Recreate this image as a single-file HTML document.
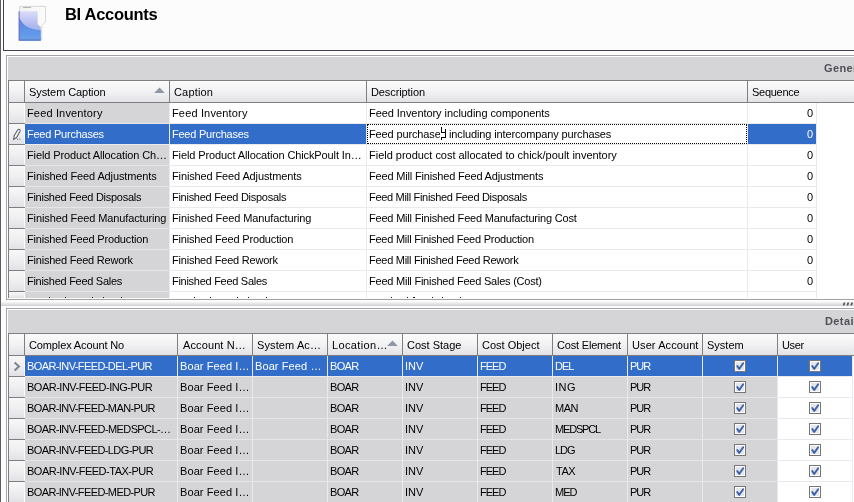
<!DOCTYPE html><html><head><meta charset="utf-8"><style>
html,body{margin:0;padding:0;}
body{width:854px;height:502px;position:relative;overflow:hidden;background:#fcfcfc;font-family:"Liberation Sans", sans-serif;font-size:11px;color:#000;}
div{box-sizing:border-box;}
.t{position:absolute;white-space:pre;overflow:hidden;will-change:transform;}
.hdr{background:linear-gradient(#fbfbfb 0%,#f3f3f5 45%,#e3e3e7 100%);}
.ind{background:linear-gradient(#f7f7f7 0%,#efeff1 50%,#e2e2e6 100%);}
.cap{background:linear-gradient(#dcdcdc,#d0d0d2);}
</style></head><body>
<div style="position:absolute;left:0px;top:0px;width:1px;height:502px;background:#5e5e60;"></div>
<div style="position:absolute;left:3px;top:0px;width:1px;height:51px;background:#404452;"></div>
<div style="position:absolute;left:3px;top:50px;width:851px;height:1px;background:#404452;"></div>
<svg style="position:absolute;left:16px;top:4px" width="32" height="40" viewBox="0 0 32 40">
<defs>
<linearGradient id="fg" x1="0" y1="0" x2="0" y2="1">
<stop offset="0" stop-color="#dcdcf8"/><stop offset="0.5" stop-color="#aeb8ee"/><stop offset="1" stop-color="#94acec"/></linearGradient>
<linearGradient id="bg2" x1="0" y1="0" x2="0" y2="1">
<stop offset="0" stop-color="#5a82dc"/><stop offset="1" stop-color="#64a2f0"/></linearGradient>
<linearGradient id="pg" x1="0" y1="0" x2="1" y2="0">
<stop offset="0" stop-color="#f2f2f2"/><stop offset="1" stop-color="#fbfbfb"/></linearGradient>
</defs>
<path d="M3.6 2.4 L29.5 2.4 L29.5 18 L25.8 21.5 L25.8 35.5 L3.6 35.5 Z" fill="url(#pg)" stroke="#d2d2d2" stroke-width="0.9"/>
<rect x="7" y="3" width="8" height="1" fill="#9a9a9a" opacity="0.7"/>
<path d="M3 7.2 L22 7.2 L22 20.3 L24.7 22.7 L24.7 36.4 L3 36.4 Z" fill="url(#fg)"/>
<path d="M3.3 13.5 Q8 25.5 24.7 26 L24.7 36.4 L3.3 36.4 Z" fill="url(#bg2)"/>
<rect x="3" y="32.5" width="21.7" height="3.9" fill="#6c9ee6"/>
<rect x="3" y="35.6" width="21.7" height="0.9" fill="#4a6cc0"/>
<rect x="2.6" y="7.2" width="1" height="29.2" fill="#6464c4"/>
<path d="M22 7.6 L22 20.3 L24.7 22.7" fill="none" stroke="#ffffff" stroke-width="0.8" opacity="0.8"/>
</svg>
<div class="t" style="left:65px;top:2px;height:24px;line-height:24px;font-size:16.5px;font-weight:bold;letter-spacing:-0.3px;">BI Accounts</div>
<div style="position:absolute;left:6px;top:55px;width:848px;height:1px;background:#a3a3a5;"></div>
<div style="position:absolute;left:6px;top:55px;width:1px;height:245px;background:#a3a3a5;"></div>
<div style="position:absolute;left:6px;top:299px;width:848px;height:1px;background:#a3a3a5;"></div>
<div style="position:absolute;left:7px;top:56px;width:847px;height:1px;background:#ffffff;"></div>
<div style="position:absolute;left:7px;top:56px;width:1px;height:243px;background:#ffffff;"></div>
<div style="position:absolute;left:8px;top:57px;width:846px;height:23px;background:#d5d4d6;"></div>
<div class="t" style="left:824px;top:59px;height:18px;line-height:18px;font-weight:bold;color:#505058;letter-spacing:0.4px;">General</div>
<div style="position:absolute;left:6px;top:308px;width:848px;height:1px;background:#a3a3a5;"></div>
<div style="position:absolute;left:6px;top:308px;width:1px;height:233px;background:#a3a3a5;"></div>
<div style="position:absolute;left:6px;top:540px;width:848px;height:1px;background:#a3a3a5;"></div>
<div style="position:absolute;left:7px;top:309px;width:847px;height:1px;background:#ffffff;"></div>
<div style="position:absolute;left:7px;top:309px;width:1px;height:231px;background:#ffffff;"></div>
<div style="position:absolute;left:8px;top:310px;width:846px;height:23px;background:#d5d4d6;"></div>
<div class="t" style="left:825px;top:312px;height:18px;line-height:18px;font-weight:bold;color:#505058;letter-spacing:0.4px;">Details</div>
<div style="position:absolute;left:0px;top:302px;width:854px;height:4px;background:linear-gradient(#f6f6f6,#d0d0d4);"></div>
<div style="position:absolute;left:0px;top:0px;width:1px;height:502px;background:#5e5e60;"></div>
<svg style="position:absolute;left:842px;top:302px" width="12" height="4" viewBox="0 0 12 4"><path d="M1.6 0.6 L3.4 0.6 L2.4 3.4 L0.8 3.4 Z M5.4 0.6 L7.2 0.6 L6.2 3.4 L4.6 3.4 Z M9.2 0.6 L11 0.6 L10 3.4 L8.4 3.4 Z" fill="#505058"/></svg>
<div style="position:absolute;left:8px;top:80px;width:846px;height:23px;background:#7f7f83;"></div>
<div class="hdr" style="position:absolute;left:9px;top:81px;width:845px;height:21px;"></div>
<div style="position:absolute;left:24px;top:80px;width:1px;height:23px;background:#7f7f83;"></div>
<div style="position:absolute;left:169px;top:80px;width:1px;height:23px;background:#7f7f83;"></div>
<div style="position:absolute;left:366px;top:80px;width:1px;height:23px;background:#7f7f83;"></div>
<div style="position:absolute;left:747px;top:80px;width:1px;height:23px;background:#7f7f83;"></div>
<div style="position:absolute;left:8px;top:80px;width:1px;height:218px;background:#7f7f83;"></div>
<div style="position:absolute;left:24px;top:80px;width:1px;height:218px;background:#7f7f83;"></div>
<div class="t" style="left:29px;top:82px;width:139px;height:20px;line-height:20px;letter-spacing:-0.077px;">System Caption</div>
<div class="t" style="left:174px;top:82px;width:191px;height:20px;line-height:20px;letter-spacing:0.167px;">Caption</div>
<div class="t" style="left:371px;top:82px;width:375px;height:20px;line-height:20px;letter-spacing:-0.100px;">Description</div>
<div class="t" style="left:752px;top:82px;width:63px;height:20px;line-height:20px;letter-spacing:-0.286px;">Sequence</div>
<svg style="position:absolute;left:154px;top:87px" width="11" height="7" viewBox="0 0 11 7"><path d="M0.2 6 L5.5 0.6 L10.8 6 Z" fill="#8e98a4"/></svg>
<div style="position:absolute;left:9px;top:103px;width:845px;height:195px;background:#ffffff;"></div>
<div class="ind" style="position:absolute;left:9px;top:103px;width:15px;height:20px;"></div>
<div style="position:absolute;left:8px;top:123px;width:17px;height:1px;background:#7f7f83;"></div>
<div style="position:absolute;left:25px;top:103px;width:144px;height:20px;background:#d5d4d6;"></div>
<div class="t" style="left:27px;top:103px;width:142px;height:20px;line-height:20px;color:#000;letter-spacing:0.154px;">Feed Inventory</div>
<div style="position:absolute;left:170px;top:103px;width:196px;height:20px;background:#ffffff;"></div>
<div class="t" style="left:172px;top:103px;width:194px;height:20px;line-height:20px;color:#000;letter-spacing:0.154px;">Feed Inventory</div>
<div style="position:absolute;left:367px;top:103px;width:380px;height:20px;background:#ffffff;"></div>
<div class="t" style="left:369px;top:103px;width:378px;height:20px;line-height:20px;color:#000;letter-spacing:-0.059px;">Feed Inventory including components</div>
<div style="position:absolute;left:748px;top:103px;width:68px;height:20px;background:#ffffff;"></div>
<div class="t" style="left:748px;top:103px;width:65px;height:20px;line-height:20px;color:#000;text-align:right;">0</div>
<div style="position:absolute;left:25px;top:123px;width:145px;height:1px;background:#e6e6e8;"></div>
<div style="position:absolute;left:170px;top:123px;width:197px;height:1px;background:#e9e9ee;"></div>
<div style="position:absolute;left:367px;top:123px;width:381px;height:1px;background:#e9e9ee;"></div>
<div style="position:absolute;left:748px;top:123px;width:69px;height:1px;background:#e9e9ee;"></div>
<div class="ind" style="position:absolute;left:9px;top:124px;width:15px;height:20px;"></div>
<div style="position:absolute;left:8px;top:144px;width:17px;height:1px;background:#7f7f83;"></div>
<div style="position:absolute;left:25px;top:124px;width:144px;height:20px;background:#326ec9;"></div>
<div class="t" style="left:27px;top:124px;width:142px;height:20px;line-height:20px;color:#fff;letter-spacing:-0.231px;">Feed Purchases</div>
<div style="position:absolute;left:170px;top:124px;width:196px;height:20px;background:#326ec9;"></div>
<div class="t" style="left:172px;top:124px;width:194px;height:20px;line-height:20px;color:#fff;letter-spacing:-0.231px;">Feed Purchases</div>
<div style="position:absolute;left:367px;top:124px;width:380px;height:20px;background:#ffffff;"></div>
<div class="t" style="left:369px;top:124px;width:378px;height:20px;line-height:20px;color:#000;letter-spacing:-0.130px;">Feed purchases including intercompany purchases</div>
<div style="position:absolute;left:748px;top:124px;width:68px;height:20px;background:#326ec9;"></div>
<div class="t" style="left:748px;top:124px;width:65px;height:20px;line-height:20px;color:#fff;text-align:right;">0</div>
<div style="position:absolute;left:25px;top:144px;width:145px;height:1px;background:#e9e9ee;"></div>
<div style="position:absolute;left:170px;top:144px;width:197px;height:1px;background:#e9e9ee;"></div>
<div style="position:absolute;left:367px;top:144px;width:381px;height:1px;background:#e9e9ee;"></div>
<div style="position:absolute;left:748px;top:144px;width:69px;height:1px;background:#e9e9ee;"></div>
<div class="ind" style="position:absolute;left:9px;top:145px;width:15px;height:20px;"></div>
<div style="position:absolute;left:8px;top:165px;width:17px;height:1px;background:#7f7f83;"></div>
<div style="position:absolute;left:25px;top:145px;width:144px;height:20px;background:#d5d4d6;"></div>
<div class="t" style="left:27px;top:145px;width:142px;height:20px;line-height:20px;color:#000;letter-spacing:-0.111px;">Field Product Allocation Ch…</div>
<div style="position:absolute;left:170px;top:145px;width:196px;height:20px;background:#ffffff;"></div>
<div class="t" style="left:172px;top:145px;width:194px;height:20px;line-height:20px;color:#000;letter-spacing:-0.105px;">Field Product Allocation ChickPoult In…</div>
<div style="position:absolute;left:367px;top:145px;width:380px;height:20px;background:#ffffff;"></div>
<div class="t" style="left:369px;top:145px;width:378px;height:20px;line-height:20px;color:#000;letter-spacing:-0.019px;">Field product cost allocated to chick/poult inventory</div>
<div style="position:absolute;left:748px;top:145px;width:68px;height:20px;background:#ffffff;"></div>
<div class="t" style="left:748px;top:145px;width:65px;height:20px;line-height:20px;color:#000;text-align:right;">0</div>
<div style="position:absolute;left:25px;top:165px;width:145px;height:1px;background:#e6e6e8;"></div>
<div style="position:absolute;left:170px;top:165px;width:197px;height:1px;background:#e9e9ee;"></div>
<div style="position:absolute;left:367px;top:165px;width:381px;height:1px;background:#e9e9ee;"></div>
<div style="position:absolute;left:748px;top:165px;width:69px;height:1px;background:#e9e9ee;"></div>
<div class="ind" style="position:absolute;left:9px;top:166px;width:15px;height:20px;"></div>
<div style="position:absolute;left:8px;top:186px;width:17px;height:1px;background:#7f7f83;"></div>
<div style="position:absolute;left:25px;top:166px;width:144px;height:20px;background:#d5d4d6;"></div>
<div class="t" style="left:27px;top:166px;width:142px;height:20px;line-height:20px;color:#000;letter-spacing:-0.125px;">Finished Feed Adjustments</div>
<div style="position:absolute;left:170px;top:166px;width:196px;height:20px;background:#ffffff;"></div>
<div class="t" style="left:172px;top:166px;width:194px;height:20px;line-height:20px;color:#000;letter-spacing:-0.125px;">Finished Feed Adjustments</div>
<div style="position:absolute;left:367px;top:166px;width:380px;height:20px;background:#ffffff;"></div>
<div class="t" style="left:369px;top:166px;width:378px;height:20px;line-height:20px;color:#000;letter-spacing:-0.176px;">Feed Mill Finished Feed Adjustments</div>
<div style="position:absolute;left:748px;top:166px;width:68px;height:20px;background:#ffffff;"></div>
<div class="t" style="left:748px;top:166px;width:65px;height:20px;line-height:20px;color:#000;text-align:right;">0</div>
<div style="position:absolute;left:25px;top:186px;width:145px;height:1px;background:#e6e6e8;"></div>
<div style="position:absolute;left:170px;top:186px;width:197px;height:1px;background:#e9e9ee;"></div>
<div style="position:absolute;left:367px;top:186px;width:381px;height:1px;background:#e9e9ee;"></div>
<div style="position:absolute;left:748px;top:186px;width:69px;height:1px;background:#e9e9ee;"></div>
<div class="ind" style="position:absolute;left:9px;top:187px;width:15px;height:20px;"></div>
<div style="position:absolute;left:8px;top:207px;width:17px;height:1px;background:#7f7f83;"></div>
<div style="position:absolute;left:25px;top:187px;width:144px;height:20px;background:#d5d4d6;"></div>
<div class="t" style="left:27px;top:187px;width:142px;height:20px;line-height:20px;color:#000;letter-spacing:-0.273px;">Finished Feed Disposals</div>
<div style="position:absolute;left:170px;top:187px;width:196px;height:20px;background:#ffffff;"></div>
<div class="t" style="left:172px;top:187px;width:194px;height:20px;line-height:20px;color:#000;letter-spacing:-0.273px;">Finished Feed Disposals</div>
<div style="position:absolute;left:367px;top:187px;width:380px;height:20px;background:#ffffff;"></div>
<div class="t" style="left:369px;top:187px;width:378px;height:20px;line-height:20px;color:#000;letter-spacing:-0.312px;">Feed Mill Finished Feed Disposals</div>
<div style="position:absolute;left:748px;top:187px;width:68px;height:20px;background:#ffffff;"></div>
<div class="t" style="left:748px;top:187px;width:65px;height:20px;line-height:20px;color:#000;text-align:right;">0</div>
<div style="position:absolute;left:25px;top:207px;width:145px;height:1px;background:#e6e6e8;"></div>
<div style="position:absolute;left:170px;top:207px;width:197px;height:1px;background:#e9e9ee;"></div>
<div style="position:absolute;left:367px;top:207px;width:381px;height:1px;background:#e9e9ee;"></div>
<div style="position:absolute;left:748px;top:207px;width:69px;height:1px;background:#e9e9ee;"></div>
<div class="ind" style="position:absolute;left:9px;top:208px;width:15px;height:20px;"></div>
<div style="position:absolute;left:8px;top:228px;width:17px;height:1px;background:#7f7f83;"></div>
<div style="position:absolute;left:25px;top:208px;width:144px;height:20px;background:#d5d4d6;"></div>
<div class="t" style="left:27px;top:208px;width:142px;height:20px;line-height:20px;color:#000;letter-spacing:-0.115px;">Finished Feed Manufacturing</div>
<div style="position:absolute;left:170px;top:208px;width:196px;height:20px;background:#ffffff;"></div>
<div class="t" style="left:172px;top:208px;width:194px;height:20px;line-height:20px;color:#000;letter-spacing:-0.115px;">Finished Feed Manufacturing</div>
<div style="position:absolute;left:367px;top:208px;width:380px;height:20px;background:#ffffff;"></div>
<div class="t" style="left:369px;top:208px;width:378px;height:20px;line-height:20px;color:#000;letter-spacing:-0.195px;">Feed Mill Finished Feed Manufacturing Cost</div>
<div style="position:absolute;left:748px;top:208px;width:68px;height:20px;background:#ffffff;"></div>
<div class="t" style="left:748px;top:208px;width:65px;height:20px;line-height:20px;color:#000;text-align:right;">0</div>
<div style="position:absolute;left:25px;top:228px;width:145px;height:1px;background:#e6e6e8;"></div>
<div style="position:absolute;left:170px;top:228px;width:197px;height:1px;background:#e9e9ee;"></div>
<div style="position:absolute;left:367px;top:228px;width:381px;height:1px;background:#e9e9ee;"></div>
<div style="position:absolute;left:748px;top:228px;width:69px;height:1px;background:#e9e9ee;"></div>
<div class="ind" style="position:absolute;left:9px;top:229px;width:15px;height:20px;"></div>
<div style="position:absolute;left:8px;top:249px;width:17px;height:1px;background:#7f7f83;"></div>
<div style="position:absolute;left:25px;top:229px;width:144px;height:20px;background:#d5d4d6;"></div>
<div class="t" style="left:27px;top:229px;width:142px;height:20px;line-height:20px;color:#000;letter-spacing:-0.174px;">Finished Feed Production</div>
<div style="position:absolute;left:170px;top:229px;width:196px;height:20px;background:#ffffff;"></div>
<div class="t" style="left:172px;top:229px;width:194px;height:20px;line-height:20px;color:#000;letter-spacing:-0.174px;">Finished Feed Production</div>
<div style="position:absolute;left:367px;top:229px;width:380px;height:20px;background:#ffffff;"></div>
<div class="t" style="left:369px;top:229px;width:378px;height:20px;line-height:20px;color:#000;letter-spacing:-0.242px;">Feed Mill Finished Feed Production</div>
<div style="position:absolute;left:748px;top:229px;width:68px;height:20px;background:#ffffff;"></div>
<div class="t" style="left:748px;top:229px;width:65px;height:20px;line-height:20px;color:#000;text-align:right;">0</div>
<div style="position:absolute;left:25px;top:249px;width:145px;height:1px;background:#e6e6e8;"></div>
<div style="position:absolute;left:170px;top:249px;width:197px;height:1px;background:#e9e9ee;"></div>
<div style="position:absolute;left:367px;top:249px;width:381px;height:1px;background:#e9e9ee;"></div>
<div style="position:absolute;left:748px;top:249px;width:69px;height:1px;background:#e9e9ee;"></div>
<div class="ind" style="position:absolute;left:9px;top:250px;width:15px;height:20px;"></div>
<div style="position:absolute;left:8px;top:270px;width:17px;height:1px;background:#7f7f83;"></div>
<div style="position:absolute;left:25px;top:250px;width:144px;height:20px;background:#d5d4d6;"></div>
<div class="t" style="left:27px;top:250px;width:142px;height:20px;line-height:20px;color:#000;letter-spacing:-0.211px;">Finished Feed Rework</div>
<div style="position:absolute;left:170px;top:250px;width:196px;height:20px;background:#ffffff;"></div>
<div class="t" style="left:172px;top:250px;width:194px;height:20px;line-height:20px;color:#000;letter-spacing:-0.211px;">Finished Feed Rework</div>
<div style="position:absolute;left:367px;top:250px;width:380px;height:20px;background:#ffffff;"></div>
<div class="t" style="left:369px;top:250px;width:378px;height:20px;line-height:20px;color:#000;letter-spacing:-0.276px;">Feed Mill Finished Feed Rework</div>
<div style="position:absolute;left:748px;top:250px;width:68px;height:20px;background:#ffffff;"></div>
<div class="t" style="left:748px;top:250px;width:65px;height:20px;line-height:20px;color:#000;text-align:right;">0</div>
<div style="position:absolute;left:25px;top:270px;width:145px;height:1px;background:#e6e6e8;"></div>
<div style="position:absolute;left:170px;top:270px;width:197px;height:1px;background:#e9e9ee;"></div>
<div style="position:absolute;left:367px;top:270px;width:381px;height:1px;background:#e9e9ee;"></div>
<div style="position:absolute;left:748px;top:270px;width:69px;height:1px;background:#e9e9ee;"></div>
<div class="ind" style="position:absolute;left:9px;top:271px;width:15px;height:20px;"></div>
<div style="position:absolute;left:8px;top:291px;width:17px;height:1px;background:#7f7f83;"></div>
<div style="position:absolute;left:25px;top:271px;width:144px;height:20px;background:#d5d4d6;"></div>
<div class="t" style="left:27px;top:271px;width:142px;height:20px;line-height:20px;color:#000;letter-spacing:-0.278px;">Finished Feed Sales</div>
<div style="position:absolute;left:170px;top:271px;width:196px;height:20px;background:#ffffff;"></div>
<div class="t" style="left:172px;top:271px;width:194px;height:20px;line-height:20px;color:#000;letter-spacing:-0.278px;">Finished Feed Sales</div>
<div style="position:absolute;left:367px;top:271px;width:380px;height:20px;background:#ffffff;"></div>
<div class="t" style="left:369px;top:271px;width:378px;height:20px;line-height:20px;color:#000;letter-spacing:-0.229px;">Feed Mill Finished Feed Sales (Cost)</div>
<div style="position:absolute;left:748px;top:271px;width:68px;height:20px;background:#ffffff;"></div>
<div class="t" style="left:748px;top:271px;width:65px;height:20px;line-height:20px;color:#000;text-align:right;">0</div>
<div style="position:absolute;left:25px;top:291px;width:145px;height:1px;background:#e6e6e8;"></div>
<div style="position:absolute;left:170px;top:291px;width:197px;height:1px;background:#e9e9ee;"></div>
<div style="position:absolute;left:367px;top:291px;width:381px;height:1px;background:#e9e9ee;"></div>
<div style="position:absolute;left:748px;top:291px;width:69px;height:1px;background:#e9e9ee;"></div>
<div class="ind" style="position:absolute;left:9px;top:292px;width:15px;height:6px;"></div>
<div style="position:absolute;left:25px;top:292px;width:144px;height:6px;background:#d5d4d6;"></div>
<div style="position:absolute;left:170px;top:292px;width:196px;height:6px;background:#ffffff;"></div>
<div style="position:absolute;left:367px;top:292px;width:380px;height:6px;background:#ffffff;"></div>
<div style="position:absolute;left:748px;top:292px;width:68px;height:6px;background:#ffffff;"></div>
<div style="position:absolute;left:169px;top:103px;width:1px;height:195px;background:#e9e9ee;"></div>
<div style="position:absolute;left:366px;top:103px;width:1px;height:195px;background:#e9e9ee;"></div>
<div style="position:absolute;left:747px;top:103px;width:1px;height:195px;background:#e9e9ee;"></div>
<div style="position:absolute;left:816px;top:103px;width:1px;height:195px;background:#e9e9ee;"></div>
<div style="position:absolute;left:49px;top:297px;width:1px;height:1px;background:#1a1a1a;"></div>
<div style="position:absolute;left:65px;top:297px;width:1px;height:1px;background:#1a1a1a;"></div>
<div style="position:absolute;left:92px;top:297px;width:1px;height:1px;background:#1a1a1a;"></div>
<div style="position:absolute;left:103px;top:297px;width:1px;height:1px;background:#1a1a1a;"></div>
<div style="position:absolute;left:121px;top:297px;width:1px;height:1px;background:#1a1a1a;"></div>
<div style="position:absolute;left:194px;top:297px;width:1px;height:1px;background:#1a1a1a;"></div>
<div style="position:absolute;left:210px;top:297px;width:1px;height:1px;background:#1a1a1a;"></div>
<div style="position:absolute;left:237px;top:297px;width:1px;height:1px;background:#1a1a1a;"></div>
<div style="position:absolute;left:248px;top:297px;width:1px;height:1px;background:#1a1a1a;"></div>
<div style="position:absolute;left:266px;top:297px;width:1px;height:1px;background:#1a1a1a;"></div>
<div style="position:absolute;left:391px;top:297px;width:1px;height:1px;background:#1a1a1a;"></div>
<div style="position:absolute;left:407px;top:297px;width:1px;height:1px;background:#1a1a1a;"></div>
<div style="position:absolute;left:432px;top:297px;width:1px;height:1px;background:#1a1a1a;"></div>
<div style="position:absolute;left:442px;top:297px;width:1px;height:1px;background:#1a1a1a;"></div>
<div style="position:absolute;left:460px;top:297px;width:1px;height:1px;background:#1a1a1a;"></div>
<div style="position:absolute;left:413px;top:297px;width:2px;height:1px;background:#1a1a1a;"></div>
<div style="position:absolute;left:440px;top:126px;width:7px;height:14px;background:#ffffff;"></div>
<div style="position:absolute;left:441px;top:127px;width:1px;height:6px;background:#000;"></div>
<div style="position:absolute;left:441px;top:132px;width:5px;height:1px;background:#000;"></div>
<div style="position:absolute;left:445px;top:129px;width:1px;height:9px;background:#000;"></div>
<div style="position:absolute;left:441px;top:137px;width:5px;height:1px;background:#000;"></div>
<div style="position:absolute;left:441px;top:137px;width:1px;height:3px;background:#000;"></div>
<svg style="position:absolute;left:12px;top:128px" width="10" height="13" viewBox="0 0 10 13"><path d="M1.6 11.3 L2.2 7.6 L5.6 2 Q6.5 0.9 7.6 1.4 Q8.5 2 8 3.2 L4.6 9.6 Z" fill="#fafafa" stroke="#626a76" stroke-width="1.15"/><rect x="5" y="10.6" width="1.1" height="1.1" fill="#6c7480"/><rect x="7.2" y="10.6" width="1.1" height="1.1" fill="#6c7480"/></svg>
<div style="position:absolute;left:367px;top:124px;width:380px;height:20px;border:1px dotted #000;"></div>
<div style="position:absolute;left:8px;top:333px;width:846px;height:23px;background:#7f7f83;"></div>
<div class="hdr" style="position:absolute;left:9px;top:334px;width:845px;height:21px;"></div>
<div style="position:absolute;left:24px;top:333px;width:1px;height:23px;background:#7f7f83;"></div>
<div style="position:absolute;left:177px;top:333px;width:1px;height:23px;background:#7f7f83;"></div>
<div style="position:absolute;left:252px;top:333px;width:1px;height:23px;background:#7f7f83;"></div>
<div style="position:absolute;left:327px;top:333px;width:1px;height:23px;background:#7f7f83;"></div>
<div style="position:absolute;left:402px;top:333px;width:1px;height:23px;background:#7f7f83;"></div>
<div style="position:absolute;left:477px;top:333px;width:1px;height:23px;background:#7f7f83;"></div>
<div style="position:absolute;left:552px;top:333px;width:1px;height:23px;background:#7f7f83;"></div>
<div style="position:absolute;left:627px;top:333px;width:1px;height:23px;background:#7f7f83;"></div>
<div style="position:absolute;left:702px;top:333px;width:1px;height:23px;background:#7f7f83;"></div>
<div style="position:absolute;left:777px;top:333px;width:1px;height:23px;background:#7f7f83;"></div>
<div style="position:absolute;left:8px;top:333px;width:1px;height:169px;background:#7f7f83;"></div>
<div style="position:absolute;left:24px;top:333px;width:1px;height:169px;background:#7f7f83;"></div>
<div class="t" style="left:29px;top:335px;width:147px;height:20px;line-height:20px;letter-spacing:-0.125px;">Complex Acount No</div>
<div class="t" style="left:183px;top:335px;width:69px;height:20px;line-height:20px;letter-spacing:0.111px;">Account N…</div>
<div class="t" style="left:257px;top:335px;width:69px;height:20px;line-height:20px;letter-spacing:0.111px;">System Ac…</div>
<div class="t" style="left:332px;top:335px;width:69px;height:20px;line-height:20px;letter-spacing:0.375px;">Location…</div>
<div class="t" style="left:407px;top:335px;width:69px;height:20px;line-height:20px;letter-spacing:0.000px;">Cost Stage</div>
<div class="t" style="left:482px;top:335px;width:69px;height:20px;line-height:20px;letter-spacing:0.000px;">Cost Object</div>
<div class="t" style="left:557px;top:335px;width:69px;height:20px;line-height:20px;letter-spacing:-0.182px;">Cost Element</div>
<div class="t" style="left:632px;top:335px;width:69px;height:20px;line-height:20px;letter-spacing:0.091px;">User Account</div>
<div class="t" style="left:707px;top:335px;width:69px;height:20px;line-height:20px;letter-spacing:0.000px;">System</div>
<div class="t" style="left:782px;top:335px;width:69px;height:20px;line-height:20px;letter-spacing:-0.333px;">User</div>
<svg style="position:absolute;left:387px;top:340px" width="11" height="7" viewBox="0 0 11 7"><path d="M0.2 6 L5.5 0.6 L10.8 6 Z" fill="#8e98a4"/></svg>
<div style="position:absolute;left:9px;top:356px;width:845px;height:146px;background:#ffffff;"></div>
<div class="ind" style="position:absolute;left:9px;top:356px;width:15px;height:20px;"></div>
<div style="position:absolute;left:8px;top:376px;width:17px;height:1px;background:#7f7f83;"></div>
<div style="position:absolute;left:25px;top:356px;width:152px;height:20px;background:#326ec9;"></div>
<div class="t" style="left:27px;top:356px;width:150px;height:20px;line-height:20px;color:#fff;letter-spacing:-0.600px;">BOAR-INV-FEED-DEL-PUR</div>
<div style="position:absolute;left:178px;top:356px;width:74px;height:20px;background:#326ec9;"></div>
<div class="t" style="left:180px;top:356px;width:72px;height:20px;line-height:20px;color:#fff;letter-spacing:0.091px;">Boar Feed I…</div>
<div style="position:absolute;left:253px;top:356px;width:74px;height:20px;background:#326ec9;"></div>
<div class="t" style="left:255px;top:356px;width:72px;height:20px;line-height:20px;color:#fff;letter-spacing:0.100px;">Boar Feed …</div>
<div style="position:absolute;left:328px;top:356px;width:74px;height:20px;background:#326ec9;"></div>
<div class="t" style="left:330px;top:356px;width:72px;height:20px;line-height:20px;color:#fff;letter-spacing:-0.667px;">BOAR</div>
<div style="position:absolute;left:403px;top:356px;width:74px;height:20px;background:#326ec9;"></div>
<div class="t" style="left:405px;top:356px;width:72px;height:20px;line-height:20px;color:#fff;letter-spacing:0.000px;">INV</div>
<div style="position:absolute;left:478px;top:356px;width:74px;height:20px;background:#326ec9;"></div>
<div class="t" style="left:480px;top:356px;width:72px;height:20px;line-height:20px;color:#fff;letter-spacing:-1.000px;">FEED</div>
<div style="position:absolute;left:553px;top:356px;width:74px;height:20px;background:#326ec9;"></div>
<div class="t" style="left:555px;top:356px;width:72px;height:20px;line-height:20px;color:#fff;letter-spacing:-1.000px;">DEL</div>
<div style="position:absolute;left:628px;top:356px;width:74px;height:20px;background:#326ec9;"></div>
<div class="t" style="left:630px;top:356px;width:72px;height:20px;line-height:20px;color:#fff;letter-spacing:-1.000px;">PUR</div>
<div style="position:absolute;left:703px;top:356px;width:74px;height:20px;background:#326ec9;"></div>
<svg style="position:absolute;left:734px;top:360px" width="12" height="12" viewBox="0 0 12 12"><rect x="0.5" y="0.5" width="11" height="11" fill="#fff" stroke="#767678"/><rect x="2" y="2" width="8" height="8" fill="#e4e6ee"/><path d="M3.3 6.1 L5.2 8.9 L9.2 3.2" fill="none" stroke="#3e62a6" stroke-width="1.9" stroke-linecap="round" stroke-linejoin="round"/></svg>
<div style="position:absolute;left:778px;top:356px;width:74px;height:20px;background:#326ec9;"></div>
<svg style="position:absolute;left:809px;top:360px" width="12" height="12" viewBox="0 0 12 12"><rect x="0.5" y="0.5" width="11" height="11" fill="#fff" stroke="#767678"/><rect x="2" y="2" width="8" height="8" fill="#e4e6ee"/><path d="M3.3 6.1 L5.2 8.9 L9.2 3.2" fill="none" stroke="#3e62a6" stroke-width="1.9" stroke-linecap="round" stroke-linejoin="round"/></svg>
<div style="position:absolute;left:25px;top:376px;width:153px;height:1px;background:#e9e9ee;"></div>
<div style="position:absolute;left:178px;top:376px;width:75px;height:1px;background:#e9e9ee;"></div>
<div style="position:absolute;left:253px;top:376px;width:75px;height:1px;background:#e9e9ee;"></div>
<div style="position:absolute;left:328px;top:376px;width:75px;height:1px;background:#e9e9ee;"></div>
<div style="position:absolute;left:403px;top:376px;width:75px;height:1px;background:#e9e9ee;"></div>
<div style="position:absolute;left:478px;top:376px;width:75px;height:1px;background:#e9e9ee;"></div>
<div style="position:absolute;left:553px;top:376px;width:75px;height:1px;background:#e9e9ee;"></div>
<div style="position:absolute;left:628px;top:376px;width:75px;height:1px;background:#e9e9ee;"></div>
<div style="position:absolute;left:703px;top:376px;width:75px;height:1px;background:#e9e9ee;"></div>
<div style="position:absolute;left:778px;top:376px;width:75px;height:1px;background:#e9e9ee;"></div>
<div class="ind" style="position:absolute;left:9px;top:377px;width:15px;height:20px;"></div>
<div style="position:absolute;left:8px;top:397px;width:17px;height:1px;background:#7f7f83;"></div>
<div style="position:absolute;left:25px;top:377px;width:152px;height:20px;background:#d5d4d6;"></div>
<div class="t" style="left:27px;top:377px;width:150px;height:20px;line-height:20px;color:#000;letter-spacing:-0.500px;">BOAR-INV-FEED-ING-PUR</div>
<div style="position:absolute;left:178px;top:377px;width:74px;height:20px;background:#d5d4d6;"></div>
<div class="t" style="left:180px;top:377px;width:72px;height:20px;line-height:20px;color:#000;letter-spacing:0.091px;">Boar Feed I…</div>
<div style="position:absolute;left:253px;top:377px;width:74px;height:20px;background:#d5d4d6;"></div>
<div style="position:absolute;left:328px;top:377px;width:74px;height:20px;background:#d5d4d6;"></div>
<div class="t" style="left:330px;top:377px;width:72px;height:20px;line-height:20px;color:#000;letter-spacing:-0.667px;">BOAR</div>
<div style="position:absolute;left:403px;top:377px;width:74px;height:20px;background:#d5d4d6;"></div>
<div class="t" style="left:405px;top:377px;width:72px;height:20px;line-height:20px;color:#000;letter-spacing:0.000px;">INV</div>
<div style="position:absolute;left:478px;top:377px;width:74px;height:20px;background:#d5d4d6;"></div>
<div class="t" style="left:480px;top:377px;width:72px;height:20px;line-height:20px;color:#000;letter-spacing:-1.000px;">FEED</div>
<div style="position:absolute;left:553px;top:377px;width:74px;height:20px;background:#d5d4d6;"></div>
<div class="t" style="left:555px;top:377px;width:72px;height:20px;line-height:20px;color:#000;letter-spacing:0.500px;">ING</div>
<div style="position:absolute;left:628px;top:377px;width:74px;height:20px;background:#d5d4d6;"></div>
<div class="t" style="left:630px;top:377px;width:72px;height:20px;line-height:20px;color:#000;letter-spacing:-1.000px;">PUR</div>
<div style="position:absolute;left:703px;top:377px;width:74px;height:20px;background:#d5d4d6;"></div>
<svg style="position:absolute;left:734px;top:381px" width="12" height="12" viewBox="0 0 12 12"><rect x="0.5" y="0.5" width="11" height="11" fill="#fff" stroke="#767678"/><rect x="2" y="2" width="8" height="8" fill="#e4e6ee"/><path d="M3.3 6.1 L5.2 8.9 L9.2 3.2" fill="none" stroke="#3e62a6" stroke-width="1.9" stroke-linecap="round" stroke-linejoin="round"/></svg>
<div style="position:absolute;left:778px;top:377px;width:74px;height:20px;background:#ffffff;"></div>
<svg style="position:absolute;left:809px;top:381px" width="12" height="12" viewBox="0 0 12 12"><rect x="0.5" y="0.5" width="11" height="11" fill="#fff" stroke="#767678"/><rect x="2" y="2" width="8" height="8" fill="#e4e6ee"/><path d="M3.3 6.1 L5.2 8.9 L9.2 3.2" fill="none" stroke="#3e62a6" stroke-width="1.9" stroke-linecap="round" stroke-linejoin="round"/></svg>
<div style="position:absolute;left:25px;top:397px;width:153px;height:1px;background:#e6e6e8;"></div>
<div style="position:absolute;left:178px;top:397px;width:75px;height:1px;background:#e6e6e8;"></div>
<div style="position:absolute;left:253px;top:397px;width:75px;height:1px;background:#e6e6e8;"></div>
<div style="position:absolute;left:328px;top:397px;width:75px;height:1px;background:#e6e6e8;"></div>
<div style="position:absolute;left:403px;top:397px;width:75px;height:1px;background:#e6e6e8;"></div>
<div style="position:absolute;left:478px;top:397px;width:75px;height:1px;background:#e6e6e8;"></div>
<div style="position:absolute;left:553px;top:397px;width:75px;height:1px;background:#e6e6e8;"></div>
<div style="position:absolute;left:628px;top:397px;width:75px;height:1px;background:#e6e6e8;"></div>
<div style="position:absolute;left:703px;top:397px;width:75px;height:1px;background:#e6e6e8;"></div>
<div style="position:absolute;left:778px;top:397px;width:75px;height:1px;background:#e9e9ee;"></div>
<div class="ind" style="position:absolute;left:9px;top:398px;width:15px;height:20px;"></div>
<div style="position:absolute;left:8px;top:418px;width:17px;height:1px;background:#7f7f83;"></div>
<div style="position:absolute;left:25px;top:398px;width:152px;height:20px;background:#d5d4d6;"></div>
<div class="t" style="left:27px;top:398px;width:150px;height:20px;line-height:20px;color:#000;letter-spacing:-0.600px;">BOAR-INV-FEED-MAN-PUR</div>
<div style="position:absolute;left:178px;top:398px;width:74px;height:20px;background:#d5d4d6;"></div>
<div class="t" style="left:180px;top:398px;width:72px;height:20px;line-height:20px;color:#000;letter-spacing:0.091px;">Boar Feed I…</div>
<div style="position:absolute;left:253px;top:398px;width:74px;height:20px;background:#d5d4d6;"></div>
<div style="position:absolute;left:328px;top:398px;width:74px;height:20px;background:#d5d4d6;"></div>
<div class="t" style="left:330px;top:398px;width:72px;height:20px;line-height:20px;color:#000;letter-spacing:-0.667px;">BOAR</div>
<div style="position:absolute;left:403px;top:398px;width:74px;height:20px;background:#d5d4d6;"></div>
<div class="t" style="left:405px;top:398px;width:72px;height:20px;line-height:20px;color:#000;letter-spacing:0.000px;">INV</div>
<div style="position:absolute;left:478px;top:398px;width:74px;height:20px;background:#d5d4d6;"></div>
<div class="t" style="left:480px;top:398px;width:72px;height:20px;line-height:20px;color:#000;letter-spacing:-1.000px;">FEED</div>
<div style="position:absolute;left:553px;top:398px;width:74px;height:20px;background:#d5d4d6;"></div>
<div class="t" style="left:555px;top:398px;width:72px;height:20px;line-height:20px;color:#000;letter-spacing:-0.500px;">MAN</div>
<div style="position:absolute;left:628px;top:398px;width:74px;height:20px;background:#d5d4d6;"></div>
<div class="t" style="left:630px;top:398px;width:72px;height:20px;line-height:20px;color:#000;letter-spacing:-1.000px;">PUR</div>
<div style="position:absolute;left:703px;top:398px;width:74px;height:20px;background:#d5d4d6;"></div>
<svg style="position:absolute;left:734px;top:402px" width="12" height="12" viewBox="0 0 12 12"><rect x="0.5" y="0.5" width="11" height="11" fill="#fff" stroke="#767678"/><rect x="2" y="2" width="8" height="8" fill="#e4e6ee"/><path d="M3.3 6.1 L5.2 8.9 L9.2 3.2" fill="none" stroke="#3e62a6" stroke-width="1.9" stroke-linecap="round" stroke-linejoin="round"/></svg>
<div style="position:absolute;left:778px;top:398px;width:74px;height:20px;background:#ffffff;"></div>
<svg style="position:absolute;left:809px;top:402px" width="12" height="12" viewBox="0 0 12 12"><rect x="0.5" y="0.5" width="11" height="11" fill="#fff" stroke="#767678"/><rect x="2" y="2" width="8" height="8" fill="#e4e6ee"/><path d="M3.3 6.1 L5.2 8.9 L9.2 3.2" fill="none" stroke="#3e62a6" stroke-width="1.9" stroke-linecap="round" stroke-linejoin="round"/></svg>
<div style="position:absolute;left:25px;top:418px;width:153px;height:1px;background:#e6e6e8;"></div>
<div style="position:absolute;left:178px;top:418px;width:75px;height:1px;background:#e6e6e8;"></div>
<div style="position:absolute;left:253px;top:418px;width:75px;height:1px;background:#e6e6e8;"></div>
<div style="position:absolute;left:328px;top:418px;width:75px;height:1px;background:#e6e6e8;"></div>
<div style="position:absolute;left:403px;top:418px;width:75px;height:1px;background:#e6e6e8;"></div>
<div style="position:absolute;left:478px;top:418px;width:75px;height:1px;background:#e6e6e8;"></div>
<div style="position:absolute;left:553px;top:418px;width:75px;height:1px;background:#e6e6e8;"></div>
<div style="position:absolute;left:628px;top:418px;width:75px;height:1px;background:#e6e6e8;"></div>
<div style="position:absolute;left:703px;top:418px;width:75px;height:1px;background:#e6e6e8;"></div>
<div style="position:absolute;left:778px;top:418px;width:75px;height:1px;background:#e9e9ee;"></div>
<div class="ind" style="position:absolute;left:9px;top:419px;width:15px;height:20px;"></div>
<div style="position:absolute;left:8px;top:439px;width:17px;height:1px;background:#7f7f83;"></div>
<div style="position:absolute;left:25px;top:419px;width:152px;height:20px;background:#d5d4d6;"></div>
<div class="t" style="left:27px;top:419px;width:150px;height:20px;line-height:20px;color:#000;letter-spacing:-0.591px;">BOAR-INV-FEED-MEDSPCL-…</div>
<div style="position:absolute;left:178px;top:419px;width:74px;height:20px;background:#d5d4d6;"></div>
<div class="t" style="left:180px;top:419px;width:72px;height:20px;line-height:20px;color:#000;letter-spacing:0.091px;">Boar Feed I…</div>
<div style="position:absolute;left:253px;top:419px;width:74px;height:20px;background:#d5d4d6;"></div>
<div style="position:absolute;left:328px;top:419px;width:74px;height:20px;background:#d5d4d6;"></div>
<div class="t" style="left:330px;top:419px;width:72px;height:20px;line-height:20px;color:#000;letter-spacing:-0.667px;">BOAR</div>
<div style="position:absolute;left:403px;top:419px;width:74px;height:20px;background:#d5d4d6;"></div>
<div class="t" style="left:405px;top:419px;width:72px;height:20px;line-height:20px;color:#000;letter-spacing:0.000px;">INV</div>
<div style="position:absolute;left:478px;top:419px;width:74px;height:20px;background:#d5d4d6;"></div>
<div class="t" style="left:480px;top:419px;width:72px;height:20px;line-height:20px;color:#000;letter-spacing:-1.000px;">FEED</div>
<div style="position:absolute;left:553px;top:419px;width:74px;height:20px;background:#d5d4d6;"></div>
<div class="t" style="left:555px;top:419px;width:72px;height:20px;line-height:20px;color:#000;letter-spacing:-1.167px;">MEDSPCL</div>
<div style="position:absolute;left:628px;top:419px;width:74px;height:20px;background:#d5d4d6;"></div>
<div class="t" style="left:630px;top:419px;width:72px;height:20px;line-height:20px;color:#000;letter-spacing:-1.000px;">PUR</div>
<div style="position:absolute;left:703px;top:419px;width:74px;height:20px;background:#d5d4d6;"></div>
<svg style="position:absolute;left:734px;top:423px" width="12" height="12" viewBox="0 0 12 12"><rect x="0.5" y="0.5" width="11" height="11" fill="#fff" stroke="#767678"/><rect x="2" y="2" width="8" height="8" fill="#e4e6ee"/><path d="M3.3 6.1 L5.2 8.9 L9.2 3.2" fill="none" stroke="#3e62a6" stroke-width="1.9" stroke-linecap="round" stroke-linejoin="round"/></svg>
<div style="position:absolute;left:778px;top:419px;width:74px;height:20px;background:#ffffff;"></div>
<svg style="position:absolute;left:809px;top:423px" width="12" height="12" viewBox="0 0 12 12"><rect x="0.5" y="0.5" width="11" height="11" fill="#fff" stroke="#767678"/><rect x="2" y="2" width="8" height="8" fill="#e4e6ee"/><path d="M3.3 6.1 L5.2 8.9 L9.2 3.2" fill="none" stroke="#3e62a6" stroke-width="1.9" stroke-linecap="round" stroke-linejoin="round"/></svg>
<div style="position:absolute;left:25px;top:439px;width:153px;height:1px;background:#e6e6e8;"></div>
<div style="position:absolute;left:178px;top:439px;width:75px;height:1px;background:#e6e6e8;"></div>
<div style="position:absolute;left:253px;top:439px;width:75px;height:1px;background:#e6e6e8;"></div>
<div style="position:absolute;left:328px;top:439px;width:75px;height:1px;background:#e6e6e8;"></div>
<div style="position:absolute;left:403px;top:439px;width:75px;height:1px;background:#e6e6e8;"></div>
<div style="position:absolute;left:478px;top:439px;width:75px;height:1px;background:#e6e6e8;"></div>
<div style="position:absolute;left:553px;top:439px;width:75px;height:1px;background:#e6e6e8;"></div>
<div style="position:absolute;left:628px;top:439px;width:75px;height:1px;background:#e6e6e8;"></div>
<div style="position:absolute;left:703px;top:439px;width:75px;height:1px;background:#e6e6e8;"></div>
<div style="position:absolute;left:778px;top:439px;width:75px;height:1px;background:#e9e9ee;"></div>
<div class="ind" style="position:absolute;left:9px;top:440px;width:15px;height:20px;"></div>
<div style="position:absolute;left:8px;top:460px;width:17px;height:1px;background:#7f7f83;"></div>
<div style="position:absolute;left:25px;top:440px;width:152px;height:20px;background:#d5d4d6;"></div>
<div class="t" style="left:27px;top:440px;width:150px;height:20px;line-height:20px;color:#000;letter-spacing:-0.600px;">BOAR-INV-FEED-LDG-PUR</div>
<div style="position:absolute;left:178px;top:440px;width:74px;height:20px;background:#d5d4d6;"></div>
<div class="t" style="left:180px;top:440px;width:72px;height:20px;line-height:20px;color:#000;letter-spacing:0.091px;">Boar Feed I…</div>
<div style="position:absolute;left:253px;top:440px;width:74px;height:20px;background:#d5d4d6;"></div>
<div style="position:absolute;left:328px;top:440px;width:74px;height:20px;background:#d5d4d6;"></div>
<div class="t" style="left:330px;top:440px;width:72px;height:20px;line-height:20px;color:#000;letter-spacing:-0.667px;">BOAR</div>
<div style="position:absolute;left:403px;top:440px;width:74px;height:20px;background:#d5d4d6;"></div>
<div class="t" style="left:405px;top:440px;width:72px;height:20px;line-height:20px;color:#000;letter-spacing:0.000px;">INV</div>
<div style="position:absolute;left:478px;top:440px;width:74px;height:20px;background:#d5d4d6;"></div>
<div class="t" style="left:480px;top:440px;width:72px;height:20px;line-height:20px;color:#000;letter-spacing:-1.000px;">FEED</div>
<div style="position:absolute;left:553px;top:440px;width:74px;height:20px;background:#d5d4d6;"></div>
<div class="t" style="left:555px;top:440px;width:72px;height:20px;line-height:20px;color:#000;letter-spacing:-1.000px;">LDG</div>
<div style="position:absolute;left:628px;top:440px;width:74px;height:20px;background:#d5d4d6;"></div>
<div class="t" style="left:630px;top:440px;width:72px;height:20px;line-height:20px;color:#000;letter-spacing:-1.000px;">PUR</div>
<div style="position:absolute;left:703px;top:440px;width:74px;height:20px;background:#d5d4d6;"></div>
<svg style="position:absolute;left:734px;top:444px" width="12" height="12" viewBox="0 0 12 12"><rect x="0.5" y="0.5" width="11" height="11" fill="#fff" stroke="#767678"/><rect x="2" y="2" width="8" height="8" fill="#e4e6ee"/><path d="M3.3 6.1 L5.2 8.9 L9.2 3.2" fill="none" stroke="#3e62a6" stroke-width="1.9" stroke-linecap="round" stroke-linejoin="round"/></svg>
<div style="position:absolute;left:778px;top:440px;width:74px;height:20px;background:#ffffff;"></div>
<svg style="position:absolute;left:809px;top:444px" width="12" height="12" viewBox="0 0 12 12"><rect x="0.5" y="0.5" width="11" height="11" fill="#fff" stroke="#767678"/><rect x="2" y="2" width="8" height="8" fill="#e4e6ee"/><path d="M3.3 6.1 L5.2 8.9 L9.2 3.2" fill="none" stroke="#3e62a6" stroke-width="1.9" stroke-linecap="round" stroke-linejoin="round"/></svg>
<div style="position:absolute;left:25px;top:460px;width:153px;height:1px;background:#e6e6e8;"></div>
<div style="position:absolute;left:178px;top:460px;width:75px;height:1px;background:#e6e6e8;"></div>
<div style="position:absolute;left:253px;top:460px;width:75px;height:1px;background:#e6e6e8;"></div>
<div style="position:absolute;left:328px;top:460px;width:75px;height:1px;background:#e6e6e8;"></div>
<div style="position:absolute;left:403px;top:460px;width:75px;height:1px;background:#e6e6e8;"></div>
<div style="position:absolute;left:478px;top:460px;width:75px;height:1px;background:#e6e6e8;"></div>
<div style="position:absolute;left:553px;top:460px;width:75px;height:1px;background:#e6e6e8;"></div>
<div style="position:absolute;left:628px;top:460px;width:75px;height:1px;background:#e6e6e8;"></div>
<div style="position:absolute;left:703px;top:460px;width:75px;height:1px;background:#e6e6e8;"></div>
<div style="position:absolute;left:778px;top:460px;width:75px;height:1px;background:#e9e9ee;"></div>
<div class="ind" style="position:absolute;left:9px;top:461px;width:15px;height:20px;"></div>
<div style="position:absolute;left:8px;top:481px;width:17px;height:1px;background:#7f7f83;"></div>
<div style="position:absolute;left:25px;top:461px;width:152px;height:20px;background:#d5d4d6;"></div>
<div class="t" style="left:27px;top:461px;width:150px;height:20px;line-height:20px;color:#000;letter-spacing:-0.500px;">BOAR-INV-FEED-TAX-PUR</div>
<div style="position:absolute;left:178px;top:461px;width:74px;height:20px;background:#d5d4d6;"></div>
<div class="t" style="left:180px;top:461px;width:72px;height:20px;line-height:20px;color:#000;letter-spacing:0.091px;">Boar Feed I…</div>
<div style="position:absolute;left:253px;top:461px;width:74px;height:20px;background:#d5d4d6;"></div>
<div style="position:absolute;left:328px;top:461px;width:74px;height:20px;background:#d5d4d6;"></div>
<div class="t" style="left:330px;top:461px;width:72px;height:20px;line-height:20px;color:#000;letter-spacing:-0.667px;">BOAR</div>
<div style="position:absolute;left:403px;top:461px;width:74px;height:20px;background:#d5d4d6;"></div>
<div class="t" style="left:405px;top:461px;width:72px;height:20px;line-height:20px;color:#000;letter-spacing:0.000px;">INV</div>
<div style="position:absolute;left:478px;top:461px;width:74px;height:20px;background:#d5d4d6;"></div>
<div class="t" style="left:480px;top:461px;width:72px;height:20px;line-height:20px;color:#000;letter-spacing:-1.000px;">FEED</div>
<div style="position:absolute;left:553px;top:461px;width:74px;height:20px;background:#d5d4d6;"></div>
<div class="t" style="left:556px;top:461px;width:71px;height:20px;line-height:20px;color:#000;letter-spacing:-0.500px;">TAX</div>
<div style="position:absolute;left:628px;top:461px;width:74px;height:20px;background:#d5d4d6;"></div>
<div class="t" style="left:630px;top:461px;width:72px;height:20px;line-height:20px;color:#000;letter-spacing:-1.000px;">PUR</div>
<div style="position:absolute;left:703px;top:461px;width:74px;height:20px;background:#d5d4d6;"></div>
<svg style="position:absolute;left:734px;top:465px" width="12" height="12" viewBox="0 0 12 12"><rect x="0.5" y="0.5" width="11" height="11" fill="#fff" stroke="#767678"/><rect x="2" y="2" width="8" height="8" fill="#e4e6ee"/><path d="M3.3 6.1 L5.2 8.9 L9.2 3.2" fill="none" stroke="#3e62a6" stroke-width="1.9" stroke-linecap="round" stroke-linejoin="round"/></svg>
<div style="position:absolute;left:778px;top:461px;width:74px;height:20px;background:#ffffff;"></div>
<svg style="position:absolute;left:809px;top:465px" width="12" height="12" viewBox="0 0 12 12"><rect x="0.5" y="0.5" width="11" height="11" fill="#fff" stroke="#767678"/><rect x="2" y="2" width="8" height="8" fill="#e4e6ee"/><path d="M3.3 6.1 L5.2 8.9 L9.2 3.2" fill="none" stroke="#3e62a6" stroke-width="1.9" stroke-linecap="round" stroke-linejoin="round"/></svg>
<div style="position:absolute;left:25px;top:481px;width:153px;height:1px;background:#e6e6e8;"></div>
<div style="position:absolute;left:178px;top:481px;width:75px;height:1px;background:#e6e6e8;"></div>
<div style="position:absolute;left:253px;top:481px;width:75px;height:1px;background:#e6e6e8;"></div>
<div style="position:absolute;left:328px;top:481px;width:75px;height:1px;background:#e6e6e8;"></div>
<div style="position:absolute;left:403px;top:481px;width:75px;height:1px;background:#e6e6e8;"></div>
<div style="position:absolute;left:478px;top:481px;width:75px;height:1px;background:#e6e6e8;"></div>
<div style="position:absolute;left:553px;top:481px;width:75px;height:1px;background:#e6e6e8;"></div>
<div style="position:absolute;left:628px;top:481px;width:75px;height:1px;background:#e6e6e8;"></div>
<div style="position:absolute;left:703px;top:481px;width:75px;height:1px;background:#e6e6e8;"></div>
<div style="position:absolute;left:778px;top:481px;width:75px;height:1px;background:#e9e9ee;"></div>
<div class="ind" style="position:absolute;left:9px;top:482px;width:15px;height:20px;"></div>
<div style="position:absolute;left:25px;top:482px;width:152px;height:20px;background:#d5d4d6;"></div>
<div class="t" style="left:27px;top:482px;width:150px;height:20px;line-height:20px;color:#000;letter-spacing:-0.600px;">BOAR-INV-FEED-MED-PUR</div>
<div style="position:absolute;left:178px;top:482px;width:74px;height:20px;background:#d5d4d6;"></div>
<div class="t" style="left:180px;top:482px;width:72px;height:20px;line-height:20px;color:#000;letter-spacing:0.091px;">Boar Feed I…</div>
<div style="position:absolute;left:253px;top:482px;width:74px;height:20px;background:#d5d4d6;"></div>
<div style="position:absolute;left:328px;top:482px;width:74px;height:20px;background:#d5d4d6;"></div>
<div class="t" style="left:330px;top:482px;width:72px;height:20px;line-height:20px;color:#000;letter-spacing:-0.667px;">BOAR</div>
<div style="position:absolute;left:403px;top:482px;width:74px;height:20px;background:#d5d4d6;"></div>
<div class="t" style="left:405px;top:482px;width:72px;height:20px;line-height:20px;color:#000;letter-spacing:0.000px;">INV</div>
<div style="position:absolute;left:478px;top:482px;width:74px;height:20px;background:#d5d4d6;"></div>
<div class="t" style="left:480px;top:482px;width:72px;height:20px;line-height:20px;color:#000;letter-spacing:-1.000px;">FEED</div>
<div style="position:absolute;left:553px;top:482px;width:74px;height:20px;background:#d5d4d6;"></div>
<div class="t" style="left:555px;top:482px;width:72px;height:20px;line-height:20px;color:#000;letter-spacing:-1.000px;">MED</div>
<div style="position:absolute;left:628px;top:482px;width:74px;height:20px;background:#d5d4d6;"></div>
<div class="t" style="left:630px;top:482px;width:72px;height:20px;line-height:20px;color:#000;letter-spacing:-1.000px;">PUR</div>
<div style="position:absolute;left:703px;top:482px;width:74px;height:20px;background:#d5d4d6;"></div>
<svg style="position:absolute;left:734px;top:486px" width="12" height="12" viewBox="0 0 12 12"><rect x="0.5" y="0.5" width="11" height="11" fill="#fff" stroke="#767678"/><rect x="2" y="2" width="8" height="8" fill="#e4e6ee"/><path d="M3.3 6.1 L5.2 8.9 L9.2 3.2" fill="none" stroke="#3e62a6" stroke-width="1.9" stroke-linecap="round" stroke-linejoin="round"/></svg>
<div style="position:absolute;left:778px;top:482px;width:74px;height:20px;background:#ffffff;"></div>
<svg style="position:absolute;left:809px;top:486px" width="12" height="12" viewBox="0 0 12 12"><rect x="0.5" y="0.5" width="11" height="11" fill="#fff" stroke="#767678"/><rect x="2" y="2" width="8" height="8" fill="#e4e6ee"/><path d="M3.3 6.1 L5.2 8.9 L9.2 3.2" fill="none" stroke="#3e62a6" stroke-width="1.9" stroke-linecap="round" stroke-linejoin="round"/></svg>
<div style="position:absolute;left:177px;top:356px;width:1px;height:146px;background:#e9e9ee;"></div>
<div style="position:absolute;left:252px;top:356px;width:1px;height:146px;background:#e9e9ee;"></div>
<div style="position:absolute;left:327px;top:356px;width:1px;height:146px;background:#e9e9ee;"></div>
<div style="position:absolute;left:402px;top:356px;width:1px;height:146px;background:#e9e9ee;"></div>
<div style="position:absolute;left:477px;top:356px;width:1px;height:146px;background:#e9e9ee;"></div>
<div style="position:absolute;left:552px;top:356px;width:1px;height:146px;background:#e9e9ee;"></div>
<div style="position:absolute;left:627px;top:356px;width:1px;height:146px;background:#e9e9ee;"></div>
<div style="position:absolute;left:702px;top:356px;width:1px;height:146px;background:#e9e9ee;"></div>
<div style="position:absolute;left:777px;top:356px;width:1px;height:146px;background:#e9e9ee;"></div>
<div style="position:absolute;left:852px;top:356px;width:1px;height:146px;background:#e9e9ee;"></div>
<svg style="position:absolute;left:12px;top:360px" width="10" height="13" viewBox="0 0 10 13"><path d="M2.6 2.4 L7 6.5 L2.6 10.6" fill="none" stroke="#7a8592" stroke-width="2"/></svg>
</body></html>
